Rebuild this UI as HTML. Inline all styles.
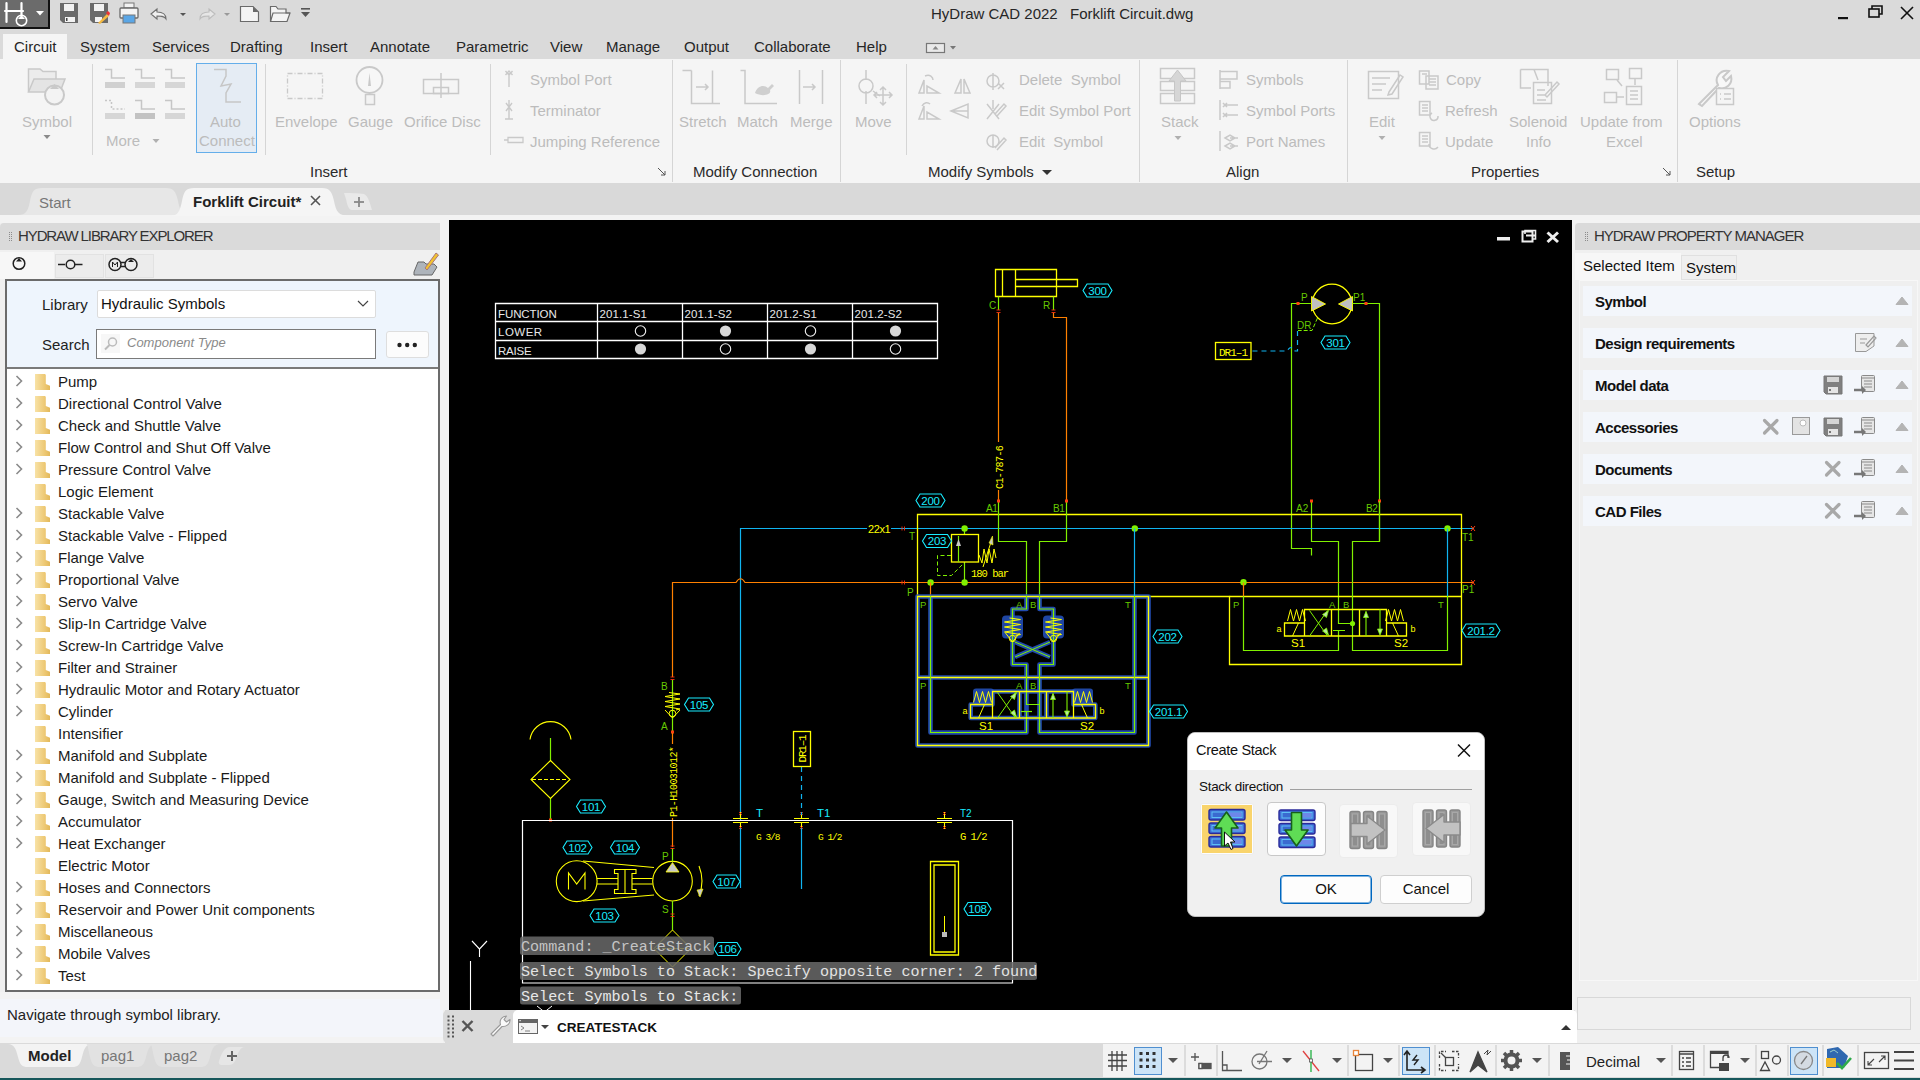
<!DOCTYPE html>
<html><head><meta charset="utf-8">
<style>
*{box-sizing:border-box;margin:0;padding:0}
html,body{width:1920px;height:1080px;overflow:hidden;background:#dadada;font-family:"Liberation Sans",sans-serif;color:#222;position:relative}
.a{position:absolute}
.t{position:absolute;white-space:nowrap}
.menu .t{font-size:15px;color:#262626;top:38px}
.rb{position:absolute;left:0;top:59px;width:1920px;height:124px;background:#f5f5f5}
.dis{color:#b5b5b5;font-size:15px}
.glab{font-size:15px;color:#262626;top:163px}
.sep{position:absolute;width:1px;background:#d5d5d5}
.tree .t{font-size:15px;color:#1a1a1a;line-height:17px}
.fold{position:absolute;left:35px;width:15px;height:16px;background:linear-gradient(90deg,#f8e2a6,#ecc670 70%,#e2b85a);clip-path:polygon(0 0,68% 0,72% 8%,72% 62%,100% 74%,100% 100%,0 100%)}
.grip{position:absolute;width:4px;height:10px;background-image:linear-gradient(90deg,#dadada 50%,transparent 50%),linear-gradient(#dadada 50%,#8c8c8c 50%);background-size:2px 2px}
</style></head><body>

<!-- title bar -->
<div class="a" style="left:0;top:0;width:50px;height:29px;background:#111"></div>
<div class="a" style="left:0;top:0;width:48px;height:27px;background:#6b6b6b"></div>
<svg class="a" style="left:0;top:0" width="50" height="29">
 <g stroke="#fff" stroke-width="2.2" fill="none" stroke-linecap="round">
  <line x1="6.5" y1="3" x2="6.5" y2="22"/><line x1="21.5" y1="3" x2="21.5" y2="15"/>
  <line x1="5" y1="11" x2="23" y2="11"/>
  <circle cx="21.5" cy="20.5" r="5.2" stroke-width="1.6"/>
 </g>
 <path d="M18 19 L21.5 15 L25 19 Z" fill="#fff"/>
 <path d="M36 11 L44 11 L40 15.5 Z" fill="#fff"/>
</svg>
<svg class="a" style="left:58px;top:2px" width="260" height="24">
 <g>
  <path d="M2 1h18v20H5l-3-3z" fill="#6a6a6a"/><rect x="6" y="2" width="10" height="7" fill="#f2f2f2"/><rect x="7" y="15" width="10" height="5" fill="#f2f2f2"/><rect x="8" y="16" width="1.5" height="3" fill="#444"/>
 </g>
 <g transform="translate(30,0)">
  <path d="M2 1h18v20H5l-3-3z" fill="#6a6a6a"/><rect x="6" y="2" width="10" height="7" fill="#f2f2f2"/><rect x="7" y="15" width="7" height="5" fill="#f2f2f2"/>
  <path d="M10 21 L19 12 L21 14 L12 22 Z" fill="#f5b940"/><path d="M18 11 L20 9 L22 11 L21 14 Z" fill="#e33"/>
 </g>
 <g transform="translate(60,0)">
  <rect x="6" y="1" width="10" height="5" fill="#f2f2f2" stroke="#777"/><rect x="2" y="6" width="18" height="10" rx="1" fill="#f4f4f4" stroke="#6a6a6a" stroke-width="1.3"/><rect x="5" y="13" width="12" height="8" fill="#5aa6e6" stroke="#777"/>
 </g>
 <g transform="translate(92,0)" fill="#f0f0f0" stroke="#707070" stroke-width="1.1">
  <path d="M1 12 L7 7 L7 10 C13 10 16 12 16 17 C14 14 11 14 7 14 L7 17 Z"/>
 </g>
 <path d="M122 11 L128 11 L125 14 Z" fill="#555"/>
 <g transform="translate(138,0)" fill="#e6e6e6" stroke="#bdbdbd" stroke-width="1.1">
  <path d="M19 12 L13 7 L13 10 C7 10 4 12 4 17 C6 14 9 14 13 14 L13 17 Z"/>
 </g>
 <path d="M166 11 L172 11 L169 14 Z" fill="#999"/>
 <path d="M182.5 4.5 H195 L200.5 10 V19.5 H182.5 Z" fill="#f4f4f4" stroke="#6a6a6a" stroke-width="1.2"/><path d="M195 4.5 L200.5 10 H195 Z" fill="#6a6a6a"/>
 <path d="M212.5 4.5 H218 L220 7 H228 V11 H232 L229 19.5 H212.5 Z" fill="#f4f4f4" stroke="#6a6a6a" stroke-width="1.2"/><path d="M212.5 19.5 L215 11 H232" fill="none" stroke="#6a6a6a" stroke-width="1.2"/>
 <rect x="243" y="6" width="9" height="1.6" fill="#555"/><path d="M243 10 L252 10 L247.5 15 Z" fill="#555"/>
</svg>
<div class="t" style="left:931px;top:5px;font-size:15px;color:#262626">HyDraw CAD 2022</div>
<div class="t" style="left:1070px;top:5px;font-size:15px;color:#262626">Forklift Circuit.dwg</div>
<svg class="a" style="left:1830px;top:0" width="90" height="28">
 <rect x="8" y="17" width="10" height="2.2" fill="#111"/>
 <g fill="none" stroke="#111" stroke-width="1.6"><rect x="39" y="9" width="10" height="8"/><path d="M42 9 V6 H52 V14 H49"/></g>
 <g stroke="#111" stroke-width="1.6"><line x1="71" y1="7" x2="83" y2="19"/><line x1="83" y1="7" x2="71" y2="19"/></g>
</svg>
<!-- menu tabs -->
<div class="menu">
<div class="a" style="left:3px;top:34px;width:64px;height:25px;background:#f5f5f5"></div>
<div class="t" style="left:14px">Circuit</div>
<div class="t" style="left:80px">System</div>
<div class="t" style="left:152px">Services</div>
<div class="t" style="left:230px">Drafting</div>
<div class="t" style="left:310px">Insert</div>
<div class="t" style="left:370px">Annotate</div>
<div class="t" style="left:456px">Parametric</div>
<div class="t" style="left:550px">View</div>
<div class="t" style="left:606px">Manage</div>
<div class="t" style="left:684px">Output</div>
<div class="t" style="left:754px">Collaborate</div>
<div class="t" style="left:856px">Help</div>
</div>

<!-- ribbon -->
<div class="rb"></div>
<div class="ribbon">
<style>
.ribbon .t{font-size:15px;line-height:17px;color:#bcbcbc}
.ribbon .g{color:#2a2a2a}
.ribbon svg{position:absolute;overflow:visible}
</style>
<!-- separators -->
<div class="sep" style="left:92px;top:64px;height:91px"></div>
<div class="sep" style="left:265px;top:64px;height:91px"></div>
<div class="sep" style="left:490px;top:64px;height:91px"></div>
<div class="sep" style="left:672px;top:60px;height:122px"></div>
<div class="sep" style="left:840px;top:60px;height:122px"></div>
<div class="sep" style="left:906px;top:64px;height:91px"></div>
<div class="sep" style="left:1139px;top:60px;height:122px"></div>
<div class="sep" style="left:1347px;top:60px;height:122px"></div>
<div class="sep" style="left:1677px;top:60px;height:122px"></div>

<!-- Symbol -->
<svg style="left:0;top:0" width="1920" height="183">
 <g fill="none" stroke="#c9c9c9" stroke-width="1.5">
  <!-- symbol folder -->
  <path d="M28.5 92 V69 H40 L43 71.5 H56 V79" fill="#ececec"/>
  <path d="M28.5 92 L34 79 H65 L60 92 Z" fill="#e4e4e4"/>
  <circle cx="54.5" cy="95" r="9.5" fill="#f3f3f3" stroke-width="2"/>
  <path d="M50 89 L54.5 84 L59 89 Z" fill="#c9c9c9" stroke="none"/>
  <!-- 6 grid icons -->
  <g stroke="#c6c6c6">
   <path d="M105 69.5 H111.5 V78 H125"/><rect x="105" y="82" width="20" height="6" fill="#d0d0d0" stroke="none"/>
   <path d="M135 69.5 H141.5 V78 H155"/><rect x="135" y="82" width="20" height="6" fill="#d6d6d6" stroke="none"/>
   <path d="M165 69.5 H171.5 V78 H185"/><rect x="165" y="82" width="20" height="6" fill="#d6d6d6" stroke="none"/>
   <path d="M105 100.5 H111.5 V109 H125" stroke-dasharray="2 2"/><rect x="105" y="113" width="20" height="6" fill="#d6d6d6" stroke="none"/>
   <path d="M135 100.5 H141.5 V109 H155"/><rect x="135" y="113" width="20" height="6" fill="#c2c2c2" stroke="none"/>
   <path d="M165 100.5 H171.5 V109 H185"/><rect x="165" y="113" width="20" height="6" fill="#d6d6d6" stroke="none"/>
  </g>
  <!-- envelope -->
  <rect x="287.5" y="73.5" width="35" height="25" stroke-dasharray="5 2 1 2" stroke-width="1.3"/>
  <!-- gauge -->
  <circle cx="369.5" cy="80" r="13" fill="#f7f7f7" stroke-width="1.8"/>
  <path d="M368 86 L369.5 73 L371 86 Z" fill="#c9c9c9" stroke="none"/>
  <rect x="365.5" y="94.5" width="9" height="10" fill="#f3f3f3"/>
  <!-- orifice -->
  <rect x="423.5" y="79.5" width="35" height="14"/><rect x="433.5" y="87.5" width="15" height="6"/><line x1="441" y1="73" x2="441" y2="98"/>
  <!-- symbol port etc -->
  <path d="M505.5 71 L509 75 L512.5 71 M505.5 75 L509 71 L512.5 75 M509 73 V87" stroke-width="1.4"/>
  <path d="M506 103 L512 111 M512 103 L506 111 M509 100 V119 M505 119 H513" stroke-width="1.4"/>
  <path d="M504 140 H508 M508 137.5 H523 V142.5 H508 Z" stroke-width="1.3"/>
  <!-- stretch -->
  <path d="M682.5 70.5 H691.5 M691.5 70.5 V103.5 H720 M712.5 70.5 V103.5 M696 87 H708 M705 84 L708 87 L705 90"/>
  <!-- match -->
  <path d="M740.5 70.5 H745 V103.5 H777"/><path d="M755 93 C757 86 764 84 768 88 L772 84 L774 86 L770 90 C772 95 762 97 755 93 Z" fill="#cfcfcf" stroke="none"/>
  <!-- merge -->
  <path d="M799.5 70 V104 M822.5 70 V104 M803 87 H815 M812 84 L815 87 L812 90"/>
  <!-- move -->
  <path d="M866 70 V80 M866 91 V104 M859 86 A7 7 0 1 0 873 86 A7 7 0 1 0 859 86 M873 91 L880 96"/>
  <path d="M883 87 V105 M874 95 H892 M880 90 L883 87 L886 90 M880 102 L883 105 L886 102 M877 92 L874 95 L877 98 M889 92 L892 95 L889 98"/>
  <!-- modify symbols small -->
  <path d="M919 93 L924 80 V93 Z M927 93 V86 L939 93 Z M925 76 C930 74 933 77 933 80"/>
  <path d="M919 119 L924 106 V119 Z M927 119 V112 L939 119 Z M922 106 C924 102 928 102 930 104"/>
  <path d="M955 93 L961 79 V93 Z M964 93 V79 L970 93 Z"/>
  <path d="M951 111 L968 104 V118 Z M951 111 H968"/>
  <path d="M993 73 V90 M987 81 A6 6 0 0 0 999 81 A6 6 0 0 0 987 81 M998 83 L1004 89 M1004 83 L998 89"/>
  <path d="M987 104 L999 119 M999 104 L987 119 M993 100 L993 109 M995 114 L1004 104 L1006 106 L997 116"/>
  <path d="M993 135 V148 M987 141 A5 5 0 0 0 999 141 A5 5 0 0 0 987 141 M995 148 L1004 138 L1006 140 L997 150"/>
  <!-- stack -->
  <rect x="1160.5" y="68.5" width="34" height="10"/><rect x="1160.5" y="81.5" width="34" height="9"/><rect x="1160.5" y="93.5" width="34" height="10"/>
  <path d="M1174.5 101 V81 H1169 L1177.5 70 L1186 81 H1180.5 V101 Z" fill="#d6d6d6" stroke="#c6c6c6" stroke-width="1"/>
  <!-- align small -->
  <path d="M1220 70 V89 M1220.5 71.5 H1237 V79 H1220.5 M1220.5 81.5 H1230 V88 H1220.5"/>
  <path d="M1220 100 V120 M1223 103 L1227 107 M1227 103 L1223 107 M1223 113 L1227 117 M1227 113 L1223 117 M1226 105 H1238 M1226 115 H1238"/>
  <path d="M1220 131 V151 M1230 138 H1238 M1230 146 H1238 M1225 138 L1230 135 L1235 138 L1230 141 Z M1225 146 L1230 143 L1235 146 L1230 149 Z"/>
  <!-- edit -->
  <rect x="1368.5" y="71.5" width="30" height="27"/><path d="M1372 78 H1390 M1372 84 H1386 M1372 90 H1382 M1389 92 L1400 75 L1403 77 L1392 94 L1388 95 Z" fill="none"/>
  <!-- copy refresh update -->
  <path d="M1419.5 71 H1429 V84 H1419.5 Z M1426 76 H1438 V89 H1426 Z M1422 74 H1427 M1429 79 H1436 M1429 82 H1436 M1429 85 H1436"/>
  <path d="M1419.5 101.5 H1430 V115 H1419.5 Z M1422 105 H1428 M1422 108 H1428 M1422 111 H1428 M1432 113 A4 4 0 1 0 1438 116"/>
  <path d="M1419.5 132.5 H1430 V146 H1419.5 Z M1422 136 H1428 M1422 139 H1428 M1422 142 H1428 M1429 144 A5 5 0 0 0 1438 147"/>
  <!-- solenoid info -->
  <path d="M1520.5 69.5 H1548 V86 M1520.5 69.5 V88 H1531 M1534 69.5 L1538 80"/><rect x="1533.5" y="82.5" width="18" height="21"/><path d="M1537 90 H1545 M1537 95 H1545 M1537 100 H1546 M1545 95 L1557 82 L1559 84 L1547 97 Z"/>
  <!-- update from excel -->
  <rect x="1606.5" y="69.5" width="12" height="10"/><rect x="1629.5" y="68.5" width="12" height="10"/><rect x="1604.5" y="92.5" width="12" height="10"/><rect x="1626.5" y="86.5" width="15" height="18"/>
  <path d="M1617 80 L1622 86 M1635 79 V85 M1617 97 H1624 M1630 91 H1638 M1630 95 H1638 M1630 99 H1638"/>
  <!-- options -->
  <path d="M1699 104 L1718 85 C1714 78 1720 69 1729 71 L1723 77 L1726 81 L1731 76 C1733 84 1726 90 1719 88 L1702 106 Z" stroke-width="2" fill="#f8f8f8"/>
  <rect x="1716.5" y="88.5" width="17" height="16" fill="#f5f5f5"/><path d="M1720 94 H1721 M1724 94 H1731 M1720 99 H1721 M1724 99 H1731"/>
 </g>
 <!-- dropdown arrows -->
 <g fill="#8a8a8a">
  <path d="M43.5 135 H50.5 L47 139 Z"/>
  <path d="M152.5 139 H159.5 L156 143 Z" fill="#b0b0b0"/>
  <path d="M1174.5 136 H1181.5 L1178 140 Z" fill="#b0b0b0"/>
  <path d="M1378.5 136 H1385.5 L1382 140 Z" fill="#b0b0b0"/>
  <path d="M1042 170 H1052 L1047 175 Z" fill="#333"/>
 </g>
 <!-- launchers -->
 <g stroke="#555" stroke-width="1" fill="none">
  <path d="M658 168 L665 175 M665 171 V175 H661"/>
  <path d="M1663 168 L1670 175 M1670 171 V175 H1666"/>
 </g>
 <!-- ribbon min btn -->
 <rect x="926.5" y="43.5" width="18" height="9" fill="#e9e9e9" stroke="#777" stroke-width="1.2"/>
 <path d="M932.5 49.5 L935.5 46 L938.5 49.5 Z" fill="#888"/><path d="M950 46 H956 L953 49.5 Z" fill="#777"/>
</svg>
<!-- auto connect highlight -->
<div class="a" style="left:196px;top:63px;width:61px;height:90px;background:#e5ecf4;border:1px solid #64aeea"></div>
<svg style="left:0;top:0" width="300" height="183">
 <g fill="none" stroke="#c6c6c6" stroke-width="1.5">
  <path d="M214 69.5 H226 V76 L221 86 L231 84 L226 93 V102 H241"/>
 </g>
</svg>

<div class="t" style="left:22px;top:113px">Symbol</div>
<div class="t" style="left:106px;top:132px">More</div>
<div class="t" style="left:210px;top:113px">Auto</div>
<div class="t" style="left:199px;top:132px">Connect</div>
<div class="t" style="left:275px;top:113px">Envelope</div>
<div class="t" style="left:348px;top:113px">Gauge</div>
<div class="t" style="left:404px;top:113px">Orifice Disc</div>
<div class="t" style="left:530px;top:71px">Symbol Port</div>
<div class="t" style="left:530px;top:102px">Terminator</div>
<div class="t" style="left:530px;top:133px">Jumping Reference</div>
<div class="t" style="left:679px;top:113px">Stretch</div>
<div class="t" style="left:737px;top:113px">Match</div>
<div class="t" style="left:790px;top:113px">Merge</div>
<div class="t" style="left:855px;top:113px">Move</div>
<div class="t" style="left:1019px;top:71px">Delete&nbsp; Symbol</div>
<div class="t" style="left:1019px;top:102px">Edit Symbol Port</div>
<div class="t" style="left:1019px;top:133px">Edit&nbsp; Symbol</div>
<div class="t" style="left:1161px;top:113px">Stack</div>
<div class="t" style="left:1246px;top:71px">Symbols</div>
<div class="t" style="left:1246px;top:102px">Symbol Ports</div>
<div class="t" style="left:1246px;top:133px">Port Names</div>
<div class="t" style="left:1369px;top:113px">Edit</div>
<div class="t" style="left:1446px;top:71px">Copy</div>
<div class="t" style="left:1445px;top:102px">Refresh</div>
<div class="t" style="left:1445px;top:133px">Update</div>
<div class="t" style="left:1509px;top:113px">Solenoid</div>
<div class="t" style="left:1526px;top:133px">Info</div>
<div class="t" style="left:1580px;top:113px">Update from</div>
<div class="t" style="left:1606px;top:133px">Excel</div>
<div class="t" style="left:1689px;top:113px">Options</div>

<div class="t g" style="left:310px;top:163px">Insert</div>
<div class="t g" style="left:693px;top:163px">Modify Connection</div>
<div class="t g" style="left:928px;top:163px">Modify Symbols</div>
<div class="t g" style="left:1226px;top:163px">Align</div>
<div class="t g" style="left:1471px;top:163px">Properties</div>
<div class="t g" style="left:1696px;top:163px">Setup</div>
</div>
<!-- doc tabs -->
<div class="a" style="left:0;top:183px;width:1920px;height:32px;background:#d9d9d9"></div>
<div class="a" style="left:0;top:215px;width:1920px;height:8px;background:#f3f3f3"></div>
<svg class="a" style="left:0;top:183px" width="400" height="34">
 <path d="M18 32 C26 32 28 28 30 18 C32 8 34 5 42 5 L166 5 C174 5 176 9 178 18 C180 28 182 32 190 32 Z" fill="#e7e7e7"/>
 <path d="M170 33 C178 33 180 28 182 18 C184 8 186 5 194 5 L322 5 C330 5 332 9 334 18 C336 28 338 33 350 33 Z" fill="#f5f5f5"/>
 <path d="M344 10 C346 10 360 10 364 11 C368 13 370 20 372 27 L352 27 C348 27 347 20 346 16 Z" fill="#e9e9e9"/>
 <g stroke="#555" stroke-width="1.6"><line x1="311" y1="13" x2="320" y2="22"/><line x1="320" y1="13" x2="311" y2="22"/></g>
 <g stroke="#888" stroke-width="1.8"><line x1="359" y1="14" x2="359" y2="24"/><line x1="354" y1="19" x2="364" y2="19"/></g>
</svg>
<div class="t" style="left:39px;top:194px;font-size:15px;color:#777">Start</div>
<div class="t" style="left:193px;top:193px;font-size:15px;font-weight:bold;color:#222">Forklift Circuit*</div>

<!-- left panel -->
<div class="a" style="left:0;top:223px;width:445px;height:820px;background:#f0f0f0"></div>
<div class="a" style="left:0;top:223px;width:445px;height:27px;background:#dadada;border-radius:4px 4px 0 0"></div>
<div class="grip" style="left:8px;top:231px"></div>
<div class="t" style="left:18px;top:227px;font-size:15px;letter-spacing:-1.1px;color:#333">HYDRAW LIBRARY EXPLORER</div>
<div class="a" style="left:0;top:252px;width:54px;height:27px;background:#f7f7f7"></div>
<div class="a" style="left:55px;top:254px;width:49px;height:24px;background:#ececec;border:1px solid #e2e2e2"></div>
<div class="a" style="left:105px;top:254px;width:49px;height:24px;background:#ececec;border:1px solid #e2e2e2"></div>
<svg class="a" style="left:0;top:250px" width="445" height="30">
 <g fill="none" stroke="#222" stroke-width="1.5">
  <circle cx="19" cy="13.5" r="5.8"/><path d="M16 11.5 L19 8 L22 11.5 Z" fill="#222" stroke="none"/>
  <line x1="58" y1="14.5" x2="65" y2="14.5"/><circle cx="70.5" cy="14.5" r="4.3"/><line x1="75" y1="14.5" x2="82.5" y2="14.5"/>
  <circle cx="115" cy="14.5" r="6"/><circle cx="131" cy="14.5" r="6"/><path d="M121 12.5 H125 M121 16.5 H125"/>
  <path d="M112.5 17 V12 L115 15 L117.5 12 V17" stroke-width="1"/><path d="M128 12 L131 9 L134 12 Z" fill="#222" stroke="none"/>
 </g>
 <path d="M414 22 L418 12 L424 12 L426 14 L434 14 L437 17 L432 25 L414 25 Z" fill="#aeb4bb" stroke="#666" stroke-width="1"/>
 <path d="M425 18 L436 3 L438.5 5 L427 20 Z" fill="#f2c230" stroke="#a77"/>
</svg>
<div class="a" style="left:5px;top:279px;width:435px;height:713px;border:2px solid #6b6b6b;background:#fff"></div>
<div class="a" style="left:7px;top:281px;width:431px;height:88px;background:#eef5fd;border-bottom:2px solid #7a7a7a"></div>
<div class="t" style="left:42px;top:296px;font-size:15px;color:#222">Library</div>
<div class="a" style="left:97px;top:290px;width:279px;height:28px;background:#fff;border:1px solid #dcdcdc;border-radius:2px"></div>
<div class="t" style="left:101px;top:295px;font-size:15px;color:#111">Hydraulic Symbols</div>
<svg class="a" style="left:355px;top:296px" width="16" height="16"><path d="M3 5 L8 10 L13 5" fill="none" stroke="#444" stroke-width="1.2"/></svg>
<div class="t" style="left:42px;top:336px;font-size:15px;color:#222">Search</div>
<div class="a" style="left:96px;top:329px;width:280px;height:30px;background:#fff;border:1px solid #7a7a7a"></div>
<svg class="a" style="left:100px;top:333px" width="22" height="22"><rect x="1" y="1" width="19" height="19" fill="#f7f7f7"/><circle cx="12.5" cy="9" r="4" fill="none" stroke="#bbb" stroke-width="1.5"/><line x1="9.5" y1="12" x2="5" y2="16.5" stroke="#bbb" stroke-width="2"/></svg>
<div class="t" style="left:127px;top:335px;font-size:13px;font-style:italic;color:#8a8a8a">Component Type</div>
<div class="a" style="left:386px;top:331px;width:43px;height:27px;background:#fcfcfc;border:1px solid #dedede;border-radius:3px"></div>
<svg class="a" style="left:386px;top:331px" width="43" height="27"><g fill="#222"><circle cx="13.5" cy="14" r="2.2"/><circle cx="21.2" cy="14" r="2.2"/><circle cx="28.8" cy="14" r="2.2"/></g></svg>
<div class="tree">
<svg class="a" style="left:0;top:0" width="60" height="1000"><g fill="none" stroke="#8a8a8a" stroke-width="1.6">
<path d="M16.5 376 L21.5 381 L16.5 386"/>
<path d="M16.5 398 L21.5 403 L16.5 408"/>
<path d="M16.5 420 L21.5 425 L16.5 430"/>
<path d="M16.5 442 L21.5 447 L16.5 452"/>
<path d="M16.5 464 L21.5 469 L16.5 474"/>
<path d="M16.5 508 L21.5 513 L16.5 518"/>
<path d="M16.5 530 L21.5 535 L16.5 540"/>
<path d="M16.5 552 L21.5 557 L16.5 562"/>
<path d="M16.5 574 L21.5 579 L16.5 584"/>
<path d="M16.5 596 L21.5 601 L16.5 606"/>
<path d="M16.5 618 L21.5 623 L16.5 628"/>
<path d="M16.5 640 L21.5 645 L16.5 650"/>
<path d="M16.5 662 L21.5 667 L16.5 672"/>
<path d="M16.5 684 L21.5 689 L16.5 694"/>
<path d="M16.5 706 L21.5 711 L16.5 716"/>
<path d="M16.5 750 L21.5 755 L16.5 760"/>
<path d="M16.5 772 L21.5 777 L16.5 782"/>
<path d="M16.5 794 L21.5 799 L16.5 804"/>
<path d="M16.5 816 L21.5 821 L16.5 826"/>
<path d="M16.5 838 L21.5 843 L16.5 848"/>
<path d="M16.5 882 L21.5 887 L16.5 892"/>
<path d="M16.5 904 L21.5 909 L16.5 914"/>
<path d="M16.5 926 L21.5 931 L16.5 936"/>
<path d="M16.5 948 L21.5 953 L16.5 958"/>
<path d="M16.5 970 L21.5 975 L16.5 980"/>
</g></svg>
<div class="t" style="left:58px;top:373px">Pump</div>
<div class="fold" style="top:374px"></div>
<div class="t" style="left:58px;top:395px">Directional Control Valve</div>
<div class="fold" style="top:396px"></div>
<div class="t" style="left:58px;top:417px">Check and Shuttle Valve</div>
<div class="fold" style="top:418px"></div>
<div class="t" style="left:58px;top:439px">Flow Control and Shut Off Valve</div>
<div class="fold" style="top:440px"></div>
<div class="t" style="left:58px;top:461px">Pressure Control Valve</div>
<div class="fold" style="top:462px"></div>
<div class="t" style="left:58px;top:483px">Logic Element</div>
<div class="fold" style="top:484px"></div>
<div class="t" style="left:58px;top:505px">Stackable Valve</div>
<div class="fold" style="top:506px"></div>
<div class="t" style="left:58px;top:527px">Stackable Valve - Flipped</div>
<div class="fold" style="top:528px"></div>
<div class="t" style="left:58px;top:549px">Flange Valve</div>
<div class="fold" style="top:550px"></div>
<div class="t" style="left:58px;top:571px">Proportional Valve</div>
<div class="fold" style="top:572px"></div>
<div class="t" style="left:58px;top:593px">Servo Valve</div>
<div class="fold" style="top:594px"></div>
<div class="t" style="left:58px;top:615px">Slip-In Cartridge Valve</div>
<div class="fold" style="top:616px"></div>
<div class="t" style="left:58px;top:637px">Screw-In Cartridge Valve</div>
<div class="fold" style="top:638px"></div>
<div class="t" style="left:58px;top:659px">Filter and Strainer</div>
<div class="fold" style="top:660px"></div>
<div class="t" style="left:58px;top:681px">Hydraulic Motor and Rotary Actuator</div>
<div class="fold" style="top:682px"></div>
<div class="t" style="left:58px;top:703px">Cylinder</div>
<div class="fold" style="top:704px"></div>
<div class="t" style="left:58px;top:725px">Intensifier</div>
<div class="fold" style="top:726px"></div>
<div class="t" style="left:58px;top:747px">Manifold and Subplate</div>
<div class="fold" style="top:748px"></div>
<div class="t" style="left:58px;top:769px">Manifold and Subplate - Flipped</div>
<div class="fold" style="top:770px"></div>
<div class="t" style="left:58px;top:791px">Gauge, Switch and Measuring Device</div>
<div class="fold" style="top:792px"></div>
<div class="t" style="left:58px;top:813px">Accumulator</div>
<div class="fold" style="top:814px"></div>
<div class="t" style="left:58px;top:835px">Heat Exchanger</div>
<div class="fold" style="top:836px"></div>
<div class="t" style="left:58px;top:857px">Electric Motor</div>
<div class="fold" style="top:858px"></div>
<div class="t" style="left:58px;top:879px">Hoses and Connectors</div>
<div class="fold" style="top:880px"></div>
<div class="t" style="left:58px;top:901px">Reservoir and Power Unit components</div>
<div class="fold" style="top:902px"></div>
<div class="t" style="left:58px;top:923px">Miscellaneous</div>
<div class="fold" style="top:924px"></div>
<div class="t" style="left:58px;top:945px">Mobile Valves</div>
<div class="fold" style="top:946px"></div>
<div class="t" style="left:58px;top:967px">Test</div>
<div class="fold" style="top:968px"></div>
</div>
<div class="a" style="left:0;top:992px;width:443px;height:51px;background:#f3f3f3"></div><div class="a" style="left:0;top:999px;width:443px;height:38px;background:#f3f5fa"></div>
<div class="t" style="left:7px;top:1006px;font-size:15px;color:#222">Navigate through symbol library.</div>

<!-- canvas -->
<div class="a" style="left:440px;top:215px;width:10px;height:795px;background:#f3f3f3"></div>
<div class="a" style="left:1570px;top:215px;width:8px;height:795px;background:#f3f3f3"></div>
<div class="a" style="left:449px;top:220px;width:1123px;height:790px;background:#000"></div>
<svg class="a" style="left:1490px;top:225px" width="80" height="25">
 <rect x="7" y="12" width="13" height="3.5" fill="#eee"/>
 <rect x="32.5" y="6.5" width="10" height="10" fill="none" stroke="#eee" stroke-width="2"/><rect x="36" y="9.5" width="9" height="2" fill="#eee"/><path d="M35 9 V5.5 H45.5 V14 H43" fill="none" stroke="#eee" stroke-width="1.6"/>
 <g stroke="#eee" stroke-width="3"><line x1="57.5" y1="7.5" x2="68" y2="17"/><line x1="68" y1="7.5" x2="57.5" y2="17"/></g>
</svg>
<div id="cad"><svg class="a" style="left:449px;top:220px" width="1123" height="791" viewBox="449 220 1123 791"><path d="M495.5 303.5 H937.5 V358.5 H495.5 Z" stroke="#ffffff" stroke-width="1.3" fill="none" />
<path d="M495.5 321.5 H937.5" stroke="#ffffff" stroke-width="1.3" fill="none" />
<path d="M495.5 340.5 H937.5" stroke="#ffffff" stroke-width="1.3" fill="none" />
<path d="M597.5 303.5 V358.5" stroke="#ffffff" stroke-width="1.3" fill="none" />
<path d="M682.5 303.5 V358.5" stroke="#ffffff" stroke-width="1.3" fill="none" />
<path d="M767.5 303.5 V358.5" stroke="#ffffff" stroke-width="1.3" fill="none" />
<path d="M852.5 303.5 V358.5" stroke="#ffffff" stroke-width="1.3" fill="none" />
<text x="498" y="317.5" fill="#e8e8e8" font-size="11.5" font-family="Liberation Sans" text-anchor="start" letter-spacing="-0.1">FUNCTION</text>
<text x="498" y="336" fill="#e8e8e8" font-size="11.5" font-family="Liberation Sans" text-anchor="start" letter-spacing="0.5">LOWER</text>
<text x="498" y="354.5" fill="#e8e8e8" font-size="11.5" font-family="Liberation Sans" text-anchor="start" letter-spacing="-0.2">RAISE</text>
<text x="599.5" y="317.5" fill="#e8e8e8" font-size="11.5" font-family="Liberation Sans" text-anchor="start" letter-spacing="0.1">201.1-S1</text>
<text x="684.5" y="317.5" fill="#e8e8e8" font-size="11.5" font-family="Liberation Sans" text-anchor="start" letter-spacing="0.1">201.1-S2</text>
<text x="769.5" y="317.5" fill="#e8e8e8" font-size="11.5" font-family="Liberation Sans" text-anchor="start" letter-spacing="0.1">201.2-S1</text>
<text x="854.5" y="317.5" fill="#e8e8e8" font-size="11.5" font-family="Liberation Sans" text-anchor="start" letter-spacing="0.1">201.2-S2</text>
<circle cx="640.5" cy="331" r="5.2" fill="none" stroke="#f0f0f0" stroke-width="1.1"/>
<circle cx="640.5" cy="349" r="5.6" fill="#d8d8d8"/>
<circle cx="725.5" cy="331" r="5.6" fill="#d8d8d8"/>
<circle cx="725.5" cy="349" r="5.2" fill="none" stroke="#f0f0f0" stroke-width="1.1"/>
<circle cx="810.5" cy="331" r="5.2" fill="none" stroke="#f0f0f0" stroke-width="1.1"/>
<circle cx="810.5" cy="349" r="5.6" fill="#d8d8d8"/>
<circle cx="895.5" cy="331" r="5.6" fill="#d8d8d8"/>
<circle cx="895.5" cy="349" r="5.2" fill="none" stroke="#f0f0f0" stroke-width="1.1"/>
<path d="M995.5 269.5 H1056.5 V296.5 H995.5 Z M1002.5 269.5 V296.5 M1015.5 269.5 V296.5 M1015.5 279.5 H1077.5 V286.5 H1015.5" stroke="#ffff00" stroke-width="1.3" fill="none" />
<path d="M998.5 296.5 V310" stroke="#80f000" stroke-width="1.2" fill="none" />
<path d="M1053.5 296.5 V310" stroke="#80f000" stroke-width="1.2" fill="none" />
<text x="989" y="309" fill="#66c800" font-size="10" font-family="Liberation Sans" text-anchor="start" >C</text>
<text x="1043" y="309" fill="#66c800" font-size="10" font-family="Liberation Sans" text-anchor="start" >R</text>
<path d="M996.5 310 H1000.5 M996.5 312.5 H1000.5" stroke="#ff3010" stroke-width="0.9" fill="none" />
<path d="M1051.5 310 H1055.5 M1051.5 312.5 H1055.5" stroke="#ff3010" stroke-width="0.9" fill="none" />
<path d="M998.5 313 V442 M998.5 490 V501" stroke="#ff8000" stroke-width="1.2" fill="none" />
<path d="M1053.5 313 V317.5 H1066.5 V501" stroke="#ff8000" stroke-width="1.2" fill="none" />
<path d="M1087.0 284.0 H1108.0 L1112.0 290.5 L1108.0 297.0 H1087.0 L1083.0 290.5 Z" stroke="#18ecff" stroke-width="1.1" fill="none"/>
<text x="1097.5" y="294.7" fill="#18ecff" font-size="11.5" font-family="Liberation Sans" text-anchor="middle" letter-spacing="-0.3">300</text>
<text x="1003" y="489" fill="#ffff00" font-size="10" font-family="Liberation Mono" text-anchor="start" transform="rotate(-90 1003 489)" letter-spacing="-0.6">C1-787-6</text>
<circle cx="1332" cy="304" r="19.8" stroke="#ffff00" stroke-width="1.2" fill="none"/>
<path d="M1311.5 296.5 L1325.5 304 L1311.5 311 Z" fill="#c0c0c0" stroke="#ffff00" stroke-width=".9"/>
<path d="M1352.5 296.5 L1338.5 304 L1352.5 311 Z" fill="#c0c0c0" stroke="#ffff00" stroke-width=".9"/>
<path d="M1311.5 303.5 H1291.5 V548.5 H1311.5 V555.5" stroke="#80f000" stroke-width="1.2" fill="none" />
<path d="M1352.5 303.5 H1379.5 V541.5" stroke="#80f000" stroke-width="1.2" fill="none" />
<path d="M1311.5 501 V541.5 H1338.5 V623.5 H1352.5" stroke="#80f000" stroke-width="1.2" fill="none" />
<rect x="1296.5" y="302.0" width="3" height="3" fill="#ff4010"/>
<rect x="1364.5" y="302.0" width="3" height="3" fill="#ff4010"/>
<text x="1301" y="301" fill="#66c800" font-size="10" font-family="Liberation Sans" text-anchor="start" >P</text>
<text x="1353" y="301" fill="#66c800" font-size="10" font-family="Liberation Sans" text-anchor="start" >P1</text>
<text x="1297" y="329" fill="#66c800" font-size="10" font-family="Liberation Sans" text-anchor="start" >DR</text>
<path d="M1317.5 318 L1312 330.5 H1298" stroke="#80f000" stroke-width="1" fill="none" stroke-dasharray="4 2"/>
<path d="M1297.5 331 V351 H1295 Q1291.5 344 1287 351 H1251" stroke="#10b4f0" stroke-width="1.2" fill="none" stroke-dasharray="5 4"/>
<rect x="1215.5" y="342.5" width="35.5" height="17" stroke="#ffff00" stroke-width="1.3" fill="none"/>
<text x="1233" y="355.5" fill="#ffff00" font-size="11" font-family="Liberation Mono" text-anchor="middle" letter-spacing="-1">DR1&#8211;1</text>
<path d="M1325.0 336.0 H1346.0 L1350.0 342.5 L1346.0 349.0 H1325.0 L1321.0 342.5 Z" stroke="#18ecff" stroke-width="1.1" fill="none"/>
<text x="1335.5" y="346.7" fill="#18ecff" font-size="11.5" font-family="Liberation Sans" text-anchor="middle" letter-spacing="-0.3">301</text>
<path d="M740.5 820 V528.5 H867 M891 528.5 H1474" stroke="#10b4f0" stroke-width="1.2" fill="none" />
<path d="M672.5 677 V582.5 H736 Q740.5 575 745 582.5 H1474" stroke="#ff8000" stroke-width="1.2" fill="none" />
<text x="868" y="533" fill="#ffff00" font-size="11" font-family="Liberation Sans" text-anchor="start" letter-spacing="-0.4">22x1</text>
<path d="M902 526.5 V530.5 M904.5 526.5 V530.5" stroke="#ff3010" stroke-width="0.9" fill="none" />
<path d="M902 580.5 V584.5 M904.5 580.5 V584.5" stroke="#ff3010" stroke-width="0.9" fill="none" />
<text x="909" y="540" fill="#66c800" font-size="10" font-family="Liberation Sans" text-anchor="start" >T</text>
<text x="907" y="596" fill="#66c800" font-size="10" font-family="Liberation Sans" text-anchor="start" >P</text>
<path d="M1471 526 L1475 531 M1475 526 L1471 531 M1471 580 L1475 585 M1475 580 L1471 585" stroke="#ff4010" stroke-width="1" fill="none" />
<path d="M917.5 596 V514.5 H1461.5 V664.5 H1229.5 V596.5 H1148.5" stroke="#ffff00" stroke-width="1.3" fill="none" />
<path d="M998.5 501 V541.5 H1026.5 V596" stroke="#80f000" stroke-width="1.2" fill="none" />
<path d="M1066.5 501 V541.5 H1039.5 V596" stroke="#80f000" stroke-width="1.2" fill="none" />
<rect x="997.0" y="499.5" width="3" height="3" fill="#ff4010"/>
<rect x="1065.0" y="499.5" width="3" height="3" fill="#ff4010"/>
<text x="986" y="512" fill="#66c800" font-size="10" font-family="Liberation Sans" text-anchor="start" letter-spacing="-0.5">A1</text>
<text x="1053" y="512" fill="#66c800" font-size="10" font-family="Liberation Sans" text-anchor="start" letter-spacing="-0.5">B1</text>
<text x="1296" y="512" fill="#66c800" font-size="10" font-family="Liberation Sans" text-anchor="start" >A2</text>
<text x="1366" y="512" fill="#66c800" font-size="10" font-family="Liberation Sans" text-anchor="start" letter-spacing="-0.5">B2</text>
<rect x="1310.0" y="499.5" width="3" height="3" fill="#ff4010"/>
<rect x="1378.0" y="499.5" width="3" height="3" fill="#ff4010"/>
<circle cx="964.6" cy="528.5" r="3.2" fill="#80f000"/>
<circle cx="930.6" cy="582.5" r="3.2" fill="#80f000"/>
<circle cx="964.6" cy="582.5" r="3.2" fill="#80f000"/>
<path d="M964.5 528.5 V534.5 M964.5 562 V582.5" stroke="#80f000" stroke-width="1.2" fill="none" />
<rect x="951.5" y="534.5" width="27" height="27.5" stroke="#ffff00" stroke-width="1.3" fill="none"/>
<path d="M958.5 536 V562" stroke="#80f000" stroke-width="1.2" fill="none" />
<path d="M956 546 L958.5 539 L961 546 Z" fill="#c8c8c8"/>
<path d="M951 555.5 H937.5 V575.5 H951.5 L964 563" stroke="#80f000" stroke-width="1" fill="none" stroke-dasharray="4 2.5"/>
<path d="M979 555 L982 563 L984 549 L987 563 L989 549 L992 563 L994 549 L996 558" stroke="#ffff00" stroke-width="1" fill="none" />
<path d="M983 567 L992 539" stroke="#ffff00" stroke-width="1" fill="none" />
<path d="M989 543 L992.5 536 L993 545 Z" fill="#c8c8c8" stroke="#ffff00" stroke-width=".6"/>
<text x="971" y="577" fill="#ffff00" font-size="10.5" font-family="Liberation Mono" text-anchor="start" letter-spacing="-1">180 bar</text>
<path d="M920.0 494.0 H941.0 L945.0 500.5 L941.0 507.0 H920.0 L916.0 500.5 Z" stroke="#18ecff" stroke-width="1.1" fill="none"/>
<text x="930.5" y="504.7" fill="#18ecff" font-size="11.5" font-family="Liberation Sans" text-anchor="middle" letter-spacing="-0.3">200</text>
<path d="M926.5 534.5 H947.5 L951.5 541 L947.5 547.5 H926.5 L922.5 541 Z" stroke="#18ecff" stroke-width="1.1" fill="none"/>
<text x="937" y="545.2" fill="#18ecff" font-size="11.5" font-family="Liberation Sans" text-anchor="middle" letter-spacing="-0.3">203</text>
<path d="M930.5 582.5 V596" stroke="#ff8000" stroke-width="1.2" fill="none" />
<rect x="1002.0" y="615.5" width="21" height="23" rx="4" fill="#2552c0" opacity=".85"/>
<rect x="1043.0" y="615.5" width="21" height="23" rx="4" fill="#2552c0" opacity=".85"/>
<rect x="973" y="688.5" width="21" height="16" rx="3" fill="#2552c0" opacity=".85"/><rect x="1072" y="688.5" width="21" height="16" rx="3" fill="#2552c0" opacity=".85"/>
<path d="M917.5 596.5 H1148.5 V745.5 H917.5 Z M917.5 677.5 H1148.5" stroke="#2552c0" stroke-width="4.6" fill="none" stroke-linejoin="round" opacity="0.9"/>
<path d="M930.5 596.5 V732.5 H1026.5 V664.5 H1012.5 V609 H1026.5 V596.5 M1039.5 596.5 V609 H1053.5 V664.5 H1039.5 V732.5 H1134.5 V596.5" stroke="#2552c0" stroke-width="4.6" fill="none" stroke-linejoin="round" opacity="0.9"/>
<path d="M1012.5 618 V640 M1053.5 618 V640 M1015 642 L1050 657 M1050 642 L1015 657" stroke="#2552c0" stroke-width="4.6" fill="none" stroke-linejoin="round" opacity="0.9"/>
<path d="M970.7 704.5 H992.5 V691.5 H1073.5 V704.5 H1095.3 V718 H970.7 Z M1019.5 691.5 V718 M1046.5 691.5 V718" stroke="#2552c0" stroke-width="4.6" fill="none" stroke-linejoin="round" opacity="0.9"/>
<path d="M917.5 596.5 H1148.5 V745.5 H917.5 Z M917.5 677.5 H1148.5" stroke="#ffff00" stroke-width="1.3" fill="none" />
<path d="M930.5 596 V732.5 H1026.5 V711.5 M1039.5 723 V732.5 H1134.5 V596" stroke="#80f000" stroke-width="1.2" fill="none" />
<path d="M1026.5 596 V609 H1012.5 V664.5 H1026.5 V704.5 H1039.5 M1039.5 596 V609 H1053.5 V664.5 H1039.5 V733" stroke="#80f000" stroke-width="1.2" fill="none" />
<path d="M1009.5 618 L1020.5 619.5 L1004.5 622 L1020.5 624.5 L1004.5 627 L1020.5 629.5 L1004.5 632 L1020.5 634.5 L1015.5 635.5" stroke="#ffff00" stroke-width="1" fill="none" />
<circle cx="1012.5" cy="638.5" r="3.2" stroke="#ffff00" stroke-width="1" fill="none"/>
<path d="M1005.5 633 L1012.5 642 L1019.5 633" stroke="#ffff00" stroke-width="1" fill="none" />
<path d="M1050.5 618 L1061.5 619.5 L1045.5 622 L1061.5 624.5 L1045.5 627 L1061.5 629.5 L1045.5 632 L1061.5 634.5 L1056.5 635.5" stroke="#ffff00" stroke-width="1" fill="none" />
<circle cx="1053.5" cy="638.5" r="3.2" stroke="#ffff00" stroke-width="1" fill="none"/>
<path d="M1046.5 633 L1053.5 642 L1060.5 633" stroke="#ffff00" stroke-width="1" fill="none" />
<path d="M1015 642 L1050 657 M1050 642 L1015 657" stroke="#80f000" stroke-width="1" fill="none" />
<text x="920" y="608" fill="#66c800" font-size="9.5" font-family="Liberation Sans" text-anchor="start" >P</text>
<text x="1016" y="608" fill="#66c800" font-size="9.5" font-family="Liberation Sans" text-anchor="start" >A</text>
<text x="1030" y="608" fill="#66c800" font-size="9.5" font-family="Liberation Sans" text-anchor="start" >B</text>
<text x="920" y="689" fill="#66c800" font-size="9.5" font-family="Liberation Sans" text-anchor="start" >P</text>
<text x="1016" y="689" fill="#66c800" font-size="9.5" font-family="Liberation Sans" text-anchor="start" >A</text>
<text x="1030" y="689" fill="#66c800" font-size="9.5" font-family="Liberation Sans" text-anchor="start" >B</text>
<text x="1125" y="689" fill="#66c800" font-size="9.5" font-family="Liberation Sans" text-anchor="start" >T</text>
<text x="1125" y="608" fill="#66c800" font-size="9.5" font-family="Liberation Sans" text-anchor="start" >T</text>
<path d="M970.5 704.5 H992.5 V691.5 H1073.5 V704.5 H1095.5 V718 H970.5 Z M992.5 691.5 V718 M1019.5 691.5 V718 M1046.5 691.5 V718 M1073.5 691.5 V718" stroke="#ffff00" stroke-width="1.3" fill="none" />
<path d="M978.5 718 L984.5 704.5" stroke="#ffff00" stroke-width="1" fill="none" />
<path d="M1087.5 718 L1081.5 704.5" stroke="#ffff00" stroke-width="1" fill="none" />
<path d="M973.5 702.5 L976.5 691.5 L979.5 702.5 L982.5 691.5 L985.5 702.5 L988.5 691.5 L991.5 702.5" stroke="#ffff00" stroke-width="1" fill="none" />
<path d="M1074.5 702.5 L1077.5 691.5 L1080.5 702.5 L1083.5 691.5 L1086.5 702.5 L1089.5 691.5 L1092.5 702.5" stroke="#ffff00" stroke-width="1" fill="none" />
<path d="M997.5 692.5 L1015.5 718 M997.5 718 L1015.5 692.5" stroke="#80f000" stroke-width="1" fill="none" />
<path d="M1016.5 692.5 L1010.5 696.5 L1014.5 699.5 Z M1016.5 717 L1010.5 713 L1014.5 710 Z" fill="#b8e8a0" stroke="#80f000" stroke-width=".8"/>
<path d="M1053.0 693.5 V718 M1067.0 691.5 V716" stroke="#80f000" stroke-width="1.1" fill="none" />
<path d="M1053.0 693.5 L1050.5 699.5 H1055.5 Z M1067.0 717 L1064.5 711 H1069.5 Z" fill="#b8e8a0" stroke="#80f000" stroke-width=".8"/>
<text x="962.5" y="714" fill="#ffff00" font-size="9" font-family="Liberation Sans" text-anchor="start" >a</text>
<text x="1099.5" y="714" fill="#ffff00" font-size="9" font-family="Liberation Sans" text-anchor="start" >b</text>
<text x="979" y="730" fill="#ffff00" font-size="11.5" font-family="Liberation Sans" text-anchor="start" >S1</text>
<text x="1080" y="730" fill="#ffff00" font-size="11.5" font-family="Liberation Sans" text-anchor="start" >S2</text>
<path d="M1021 711.5 H1032" stroke="#80f000" stroke-width="1.2" fill="none" />
<path d="M1153.5 705.0 H1183.5 L1187.5 711.5 L1183.5 718.0 H1153.5 L1149.5 711.5 Z" stroke="#18ecff" stroke-width="1.1" fill="none"/>
<text x="1168.5" y="715.7" fill="#18ecff" font-size="11.5" font-family="Liberation Sans" text-anchor="middle" letter-spacing="-0.3">201.1</text>
<path d="M1157.0 630.0 H1178.0 L1182.0 636.5 L1178.0 643.0 H1157.0 L1153.0 636.5 Z" stroke="#18ecff" stroke-width="1.1" fill="none"/>
<text x="1167.5" y="640.7" fill="#18ecff" font-size="11.5" font-family="Liberation Sans" text-anchor="middle" letter-spacing="-0.3">202</text>
<path d="M1229.5 596.5 H1461.5" stroke="#ffff00" stroke-width="1.3" fill="none" />
<circle cx="1243.5" cy="582.3" r="3.2" fill="#80f000"/>
<circle cx="1134.8" cy="528.5" r="3.2" fill="#80f000"/>
<circle cx="1447.5" cy="528.5" r="3.2" fill="#80f000"/>
<path d="M1243.5 582.5 V596" stroke="#ff8000" stroke-width="1.2" fill="none" />
<path d="M1134.5 528.5 V596 M1447.5 528.5 V596" stroke="#10b4f0" stroke-width="1.2" fill="none" />
<path d="M1379.5 501 V541.5 H1352.5 V650.5 H1447.5 V596" stroke="#80f000" stroke-width="1.2" fill="none" />
<path d="M1243.5 596 V650.5 H1338.5 V630" stroke="#80f000" stroke-width="1.2" fill="none" />
<circle cx="1352.5" cy="623.5" r="2.6" fill="#80f000"/>
<path d="M1284.5 623 H1304.5 V609.5 H1386.5 V623 H1406.5 V636 H1284.5 Z M1304.5 609.5 V636 M1331.5 609.5 V636 M1359.5 609.5 V636 M1386.5 609.5 V636" stroke="#ffff00" stroke-width="1.3" fill="none" />
<path d="M1292.5 636 L1298.5 623" stroke="#ffff00" stroke-width="1" fill="none" />
<path d="M1398.5 636 L1392.5 623" stroke="#ffff00" stroke-width="1" fill="none" />
<path d="M1287.5 621 L1290.5 609.5 L1293.5 621 L1296.5 609.5 L1299.5 621 L1302.5 609.5 L1305.5 621" stroke="#ffff00" stroke-width="1" fill="none" />
<path d="M1385.5 621 L1388.5 609.5 L1391.5 621 L1394.5 609.5 L1397.5 621 L1400.5 609.5 L1403.5 621" stroke="#ffff00" stroke-width="1" fill="none" />
<path d="M1309.5 610.5 L1327.5 636 M1309.5 636 L1327.5 610.5" stroke="#80f000" stroke-width="1" fill="none" />
<path d="M1328.5 610.5 L1322.5 614.5 L1326.5 617.5 Z M1328.5 635 L1322.5 631 L1326.5 628 Z" fill="#b8e8a0" stroke="#80f000" stroke-width=".8"/>
<path d="M1366.0 611.5 V636 M1380.0 609.5 V634" stroke="#80f000" stroke-width="1.1" fill="none" />
<path d="M1366.0 611.5 L1363.5 617.5 H1368.5 Z M1380.0 635 L1377.5 629 H1382.5 Z" fill="#b8e8a0" stroke="#80f000" stroke-width=".8"/>
<text x="1276.5" y="632" fill="#ffff00" font-size="9" font-family="Liberation Sans" text-anchor="start" >a</text>
<text x="1410.5" y="632" fill="#ffff00" font-size="9" font-family="Liberation Sans" text-anchor="start" >b</text>
<text x="1291" y="647" fill="#ffff00" font-size="11.5" font-family="Liberation Sans" text-anchor="start" >S1</text>
<text x="1394" y="647" fill="#ffff00" font-size="11.5" font-family="Liberation Sans" text-anchor="start" >S2</text>
<path d="M1333 630.5 H1345" stroke="#80f000" stroke-width="1" fill="none" />
<text x="1233" y="608" fill="#66c800" font-size="9.5" font-family="Liberation Sans" text-anchor="start" >P</text>
<text x="1329" y="608" fill="#66c800" font-size="9.5" font-family="Liberation Sans" text-anchor="start" >A</text>
<text x="1343" y="608" fill="#66c800" font-size="9.5" font-family="Liberation Sans" text-anchor="start" >B</text>
<text x="1438" y="608" fill="#66c800" font-size="9.5" font-family="Liberation Sans" text-anchor="start" >T</text>
<text x="1462" y="541" fill="#66c800" font-size="10" font-family="Liberation Sans" text-anchor="start" >T1</text>
<text x="1462" y="593" fill="#66c800" font-size="10" font-family="Liberation Sans" text-anchor="start" >P1</text>
<path d="M1466.0 624.0 H1496.0 L1500.0 630.5 L1496.0 637.0 H1466.0 L1462.0 630.5 Z" stroke="#18ecff" stroke-width="1.1" fill="none"/>
<text x="1481" y="634.7" fill="#18ecff" font-size="11.5" font-family="Liberation Sans" text-anchor="middle" letter-spacing="-0.3">201.2</text>
<path d="M672.5 680 V732" stroke="#80f000" stroke-width="1.2" fill="none" />
<path d="M670.5 677 H674.5 M670.5 679.5 H674.5" stroke="#ff3010" stroke-width="0.9" fill="none" />
<path d="M669 692.5 L680 694 L665 696.5 L680 699 L665 701.5 L680 704 L665 706.5 L680 709 L676 710" stroke="#ffff00" stroke-width="1" fill="none" />
<circle cx="672.5" cy="713.5" r="3.3" stroke="#ffff00" stroke-width="1" fill="none"/>
<path d="M665 710 L672.5 718 L680 710" stroke="#ffff00" stroke-width="1" fill="none" />
<text x="661" y="690" fill="#66c800" font-size="10" font-family="Liberation Sans" text-anchor="start" >B</text>
<text x="661" y="730" fill="#66c800" font-size="10" font-family="Liberation Sans" text-anchor="start" >A</text>
<rect x="671.0" y="730.5" width="3" height="3" fill="#ff4010"/>
<path d="M672.5 733 V744 M672.5 818 V847" stroke="#ff8000" stroke-width="1.2" fill="none" />
<text x="676.5" y="817" fill="#ffff00" font-size="10" font-family="Liberation Mono" text-anchor="start" transform="rotate(-90 676.5 817)" letter-spacing="-0.6">P1-H10031012*</text>
<path d="M688.5 698.0 H709.5 L713.5 704.5 L709.5 711.0 H688.5 L684.5 704.5 Z" stroke="#18ecff" stroke-width="1.1" fill="none"/>
<text x="699" y="708.7" fill="#18ecff" font-size="11.5" font-family="Liberation Sans" text-anchor="middle" letter-spacing="-0.3">105</text>
<path d="M530 739.5 A20.7 20.7 0 0 1 571 739.5" stroke="#ffff00" stroke-width="1.1" fill="none" />
<path d="M550.5 738 V760.5 M550.5 798 V820" stroke="#80f000" stroke-width="1.2" fill="none" />
<path d="M550.5 760.5 L570 779.5 L550.5 798.5 L531 779.5 Z" stroke="#ffff00" stroke-width="1.1" fill="none" />
<path d="M532 779.5 H568" stroke="#ffff00" stroke-width="1" fill="none" stroke-dasharray="4 2"/>
<rect x="549.0" y="818.5" width="3" height="3" fill="#ff4010"/>
<path d="M580.5 800.0 H601.5 L605.5 806.5 L601.5 813.0 H580.5 L576.5 806.5 Z" stroke="#18ecff" stroke-width="1.1" fill="none"/>
<text x="591" y="810.7" fill="#18ecff" font-size="11.5" font-family="Liberation Sans" text-anchor="middle" letter-spacing="-0.3">101</text>
<path d="M522.5 983 V820.5 H1012.5 V983 Z" stroke="#ffffff" stroke-width="1.2" fill="none" />
<path d="M733.0 818.5 H748.0 M733.0 822.5 H748.0 M740.5 812 V818.5 M740.5 822.5 V829" stroke="#ffff00" stroke-width="1.1" fill="none" />
<path d="M739.0 812 L742.0 815 M742.0 812 L739.0 815 M739.0 826 L742.0 829 M742.0 826 L739.0 829" stroke="#ff3010" stroke-width="0.8" fill="none" />
<text x="756.0" y="817" fill="#18ecff" font-size="11.5" font-family="Liberation Sans" text-anchor="start" >T</text>
<path d="M794.0 818.5 H809.0 M794.0 822.5 H809.0 M801.5 812 V818.5 M801.5 822.5 V829" stroke="#ffff00" stroke-width="1.1" fill="none" />
<path d="M800.0 812 L803.0 815 M803.0 812 L800.0 815 M800.0 826 L803.0 829 M803.0 826 L800.0 829" stroke="#ff3010" stroke-width="0.8" fill="none" />
<text x="817.0" y="817" fill="#18ecff" font-size="11.5" font-family="Liberation Sans" text-anchor="start" >T1</text>
<path d="M937.0 818.5 H952.0 M937.0 822.5 H952.0 M944.5 812 V818.5 M944.5 822.5 V829" stroke="#ffff00" stroke-width="1.1" fill="none" />
<path d="M943.0 812 L946.0 815 M946.0 812 L943.0 815 M943.0 826 L946.0 829 M946.0 826 L943.0 829" stroke="#ff3010" stroke-width="0.8" fill="none" />
<text x="960.0" y="817" fill="#18ecff" font-size="10" font-family="Liberation Sans" text-anchor="start" >T2</text>
<text x="756" y="840" fill="#ffff00" font-size="9.5" font-family="Liberation Mono" text-anchor="start" letter-spacing="-1">G 3/8</text>
<text x="818" y="840" fill="#ffff00" font-size="9.5" font-family="Liberation Mono" text-anchor="start" letter-spacing="-1">G 1/2</text>
<text x="960" y="840" fill="#ffff00" font-size="10.5" font-family="Liberation Mono" text-anchor="start" letter-spacing="-1">G 1/2</text>
<path d="M740.5 828 V888 M801.5 828 V889" stroke="#10b4f0" stroke-width="1.2" fill="none" />
<path d="M801.5 767 V815" stroke="#10b4f0" stroke-width="1.2" fill="none" stroke-dasharray="5 4"/>
<rect x="793.5" y="731.5" width="17" height="35" stroke="#ffff00" stroke-width="1.3" fill="none"/>
<text x="806" y="749" fill="#ffff00" font-size="11" font-family="Liberation Mono" text-anchor="middle" transform="rotate(-90 806 749)" letter-spacing="-1.2">DR1&#8211;1</text>
<path d="M930.5 955 V861.5 H958.5 V955 Z M934 952 V865 H955 V952 Z" stroke="#ffff00" stroke-width="1.3" fill="none" />
<path d="M944.5 827 V860 M944.5 888 V936" stroke="#ffff00" stroke-width="0" fill="none" />
<path d="M944.5 916 V935" stroke="#ffff00" stroke-width="1" fill="none" />
<rect x="942" y="932" width="5" height="5" fill="#bbb"/>
<path d="M968.0 902.5 H987.0 L991.0 909 L987.0 915.5 H968.0 L964.0 909 Z" stroke="#18ecff" stroke-width="1.1" fill="none"/>
<text x="977.5" y="913.2" fill="#18ecff" font-size="11.5" font-family="Liberation Sans" text-anchor="middle" letter-spacing="-0.3">108</text>
<circle cx="576.7" cy="881.2" r="20.4" stroke="#ffff00" stroke-width="1.1" fill="none"/>
<path d="M568.5 889.5 V873 L576.7 884 L585 873 V889.5" stroke="#ffff00" stroke-width="1.1" fill="none" />
<circle cx="672.5" cy="881.2" r="19.8" stroke="#ffff00" stroke-width="1.1" fill="none"/>
<path d="M666 872 L672.5 862.5 L679 872 Z" fill="#c8c8c8" stroke="#ffff00" stroke-width=".8"/>
<path d="M597 878.5 H618 M597 884 H618 M632 878.5 H652.5 M632 884 H652.5" stroke="#ffff00" stroke-width="1.1" fill="none" />
<path d="M614.5 869.5 H636 V873.5 H632 V889.5 H636 V893.5 H614.5 V889.5 H618 V873.5 H614.5 Z M625 869.5 V893.5" stroke="#ffff00" stroke-width="1.1" fill="none" />
<path d="M583 861 L654 867.5 M583 901 L654 895" stroke="#ffff00" stroke-width="1.1" fill="none" />
<path d="M699 866 Q705 881 699 896" stroke="#ffff00" stroke-width="1.1" fill="none" />
<path d="M697 890 L700 897 L703 889 Z" fill="#c8c8c8" stroke="#ffff00" stroke-width=".6"/>
<path d="M672.5 848 V861.5 M672.5 901 V930" stroke="#80f000" stroke-width="1.2" fill="none" />
<path d="M670.5 846 H674.5 M670.5 848.5 H674.5" stroke="#ff3010" stroke-width="0.9" fill="none" />
<path d="M670.5 914 H674.5 M670.5 916.5 H674.5" stroke="#ff3010" stroke-width="0.9" fill="none" />
<text x="662" y="859.5" fill="#66c800" font-size="10" font-family="Liberation Sans" text-anchor="start" >P</text>
<text x="662" y="913" fill="#66c800" font-size="10" font-family="Liberation Sans" text-anchor="start" >S</text>
<path d="M672.5 930 L691 948.5 L672.5 967 L654 948.5 Z" stroke="#ffff00" stroke-width="1" fill="none" />
<path d="M656 948.5 H689" stroke="#ffff00" stroke-width="1" fill="none" stroke-dasharray="4 2"/>
<path d="M567.0 841.0 H588.0 L592.0 847.5 L588.0 854.0 H567.0 L563.0 847.5 Z" stroke="#18ecff" stroke-width="1.1" fill="none"/>
<text x="577.5" y="851.7" fill="#18ecff" font-size="11.5" font-family="Liberation Sans" text-anchor="middle" letter-spacing="-0.3">102</text>
<path d="M614.5 841.0 H635.5 L639.5 847.5 L635.5 854.0 H614.5 L610.5 847.5 Z" stroke="#18ecff" stroke-width="1.1" fill="none"/>
<text x="625" y="851.7" fill="#18ecff" font-size="11.5" font-family="Liberation Sans" text-anchor="middle" letter-spacing="-0.3">104</text>
<path d="M594.0 909.0 H615.0 L619.0 915.5 L615.0 922.0 H594.0 L590.0 915.5 Z" stroke="#18ecff" stroke-width="1.1" fill="none"/>
<text x="604.5" y="919.7" fill="#18ecff" font-size="11.5" font-family="Liberation Sans" text-anchor="middle" letter-spacing="-0.3">103</text>
<path d="M717.0 875.0 H736.0 L740.0 881.5 L736.0 888.0 H717.0 L713.0 881.5 Z" stroke="#18ecff" stroke-width="1.1" fill="none"/>
<text x="726.5" y="885.7" fill="#18ecff" font-size="11.5" font-family="Liberation Sans" text-anchor="middle" letter-spacing="-0.3">107</text>
<path d="M718.0 942.5 H737.0 L741.0 949 L737.0 955.5 H718.0 L714.0 949 Z" stroke="#18ecff" stroke-width="1.1" fill="none"/>
<text x="727.5" y="953.2" fill="#18ecff" font-size="11.5" font-family="Liberation Sans" text-anchor="middle" letter-spacing="-0.3">106</text>
<rect x="520" y="936.5" width="194" height="18.5" rx="2.5" fill="#6a6a6a" fill-opacity="0.85"/>
<text x="521" y="951" fill="#c4c4c4" font-size="15.1" font-family="Liberation Mono" text-anchor="start" >Command: _CreateStack</text>
<rect x="520" y="962" width="517" height="18" rx="2.5" fill="#6a6a6a" fill-opacity="0.85"/>
<text x="521" y="976" fill="#e2e2e2" font-size="15.1" font-family="Liberation Mono" text-anchor="start" >Select Symbols to Stack: Specify opposite corner: 2 found</text>
<rect x="520" y="986.5" width="221" height="18.0" rx="2.5" fill="#6a6a6a" fill-opacity="0.85"/>
<text x="521" y="1000.5" fill="#e8e8e8" font-size="15.1" font-family="Liberation Mono" text-anchor="start" >Select Symbols to Stack:</text>
<path d="M470.5 961 V1011 M479.5 957 V949 L472 941 M479.5 949 L487 941" stroke="#ffffff" stroke-width="1.1" fill="none" />
<path d="M537 1006 L544.5 1012 M552 1006 L544.5 1012" stroke="#ffffff" stroke-width="1" fill="none" /></svg></div>

<div id="dialog">
<div class="a" style="left:1187px;top:732px;width:298px;height:185px;background:#f0f0f0;border-radius:8px;border:1px solid #bdbdbd;overflow:hidden;box-shadow:0 2px 8px rgba(0,0,0,.3)">
 <div class="a" style="left:0;top:0;width:298px;height:37px;background:#fff"></div>
</div>
<div class="t" style="left:1196px;top:742px;font-size:14.5px;letter-spacing:-0.3px;color:#111">Create Stack</div>
<div class="t" style="left:1199px;top:779px;font-size:13.5px;letter-spacing:-0.3px;color:#111">Stack direction</div>
<div class="a" style="left:1290px;top:789px;width:182px;height:1px;background:#a0a0a0"></div>
<div class="a" style="left:1200px;top:803px;width:54px;height:52px;background:#fdfdfd;border:1px solid #ececec;border-radius:3px"></div>
<div class="a" style="left:1202px;top:805px;width:50px;height:48px;background:#f9d46c"></div>
<div class="a" style="left:1267px;top:802px;width:59px;height:54px;background:#fdfdfd;border:1px solid #c8c8c8;border-radius:4px"></div>
<div class="a" style="left:1339px;top:804px;width:59px;height:54px;background:#f8f8f8;border:1px solid #ececec;border-radius:4px"></div>
<div class="a" style="left:1412px;top:802px;width:59px;height:54px;background:#f8f8f8;border:1px solid #ececec;border-radius:4px"></div>
<svg class="a" style="left:0;top:0;overflow:visible" width="1920" height="1080">
 <g stroke="#111" stroke-width="1.5"><line x1="1458" y1="744.5" x2="1470" y2="756.5"/><line x1="1470" y1="744.5" x2="1458" y2="756.5"/></g>
 <rect x="1209.0" y="809.5" width="36" height="10.5" rx="2" fill="#3f6fd6" stroke="#2a2a9a" stroke-width="1.4"/><rect x="1212.0" y="812" width="30" height="5.5" fill="#3a6ad0" stroke="#5ec0f4" stroke-width="1"/><rect x="1228.5" y="812.5" width="13" height="4.5" fill="#7a8ff0" opacity=".8"/><rect x="1209.0" y="823.0" width="36" height="10.5" rx="2" fill="#3f6fd6" stroke="#2a2a9a" stroke-width="1.4"/><rect x="1212.0" y="825.5" width="30" height="5.5" fill="#3a6ad0" stroke="#5ec0f4" stroke-width="1"/><rect x="1228.5" y="826.0" width="13" height="4.5" fill="#7a8ff0" opacity=".8"/><rect x="1209.0" y="836.5" width="36" height="10.5" rx="2" fill="#3f6fd6" stroke="#2a2a9a" stroke-width="1.4"/><rect x="1212.0" y="839" width="30" height="5.5" fill="#3a6ad0" stroke="#5ec0f4" stroke-width="1"/><rect x="1228.5" y="839.5" width="13" height="4.5" fill="#7a8ff0" opacity=".8"/>
 <path d="M1226.5 812 L1238 828 H1231.5 V846 H1221.5 V828 H1215 Z" fill="#5fdc55" stroke="#17601a" stroke-width="1.6" stroke-linejoin="round"/>
 <path d="M1224.5 832 V846 L1228 843 L1231 849.5 L1233 848.5 L1230.5 842 H1235 Z" fill="#fff" stroke="#111" stroke-width="1"/>
 <rect x="1279.0" y="810.0" width="36" height="10.5" rx="2" fill="#3f6fd6" stroke="#2a2a9a" stroke-width="1.4"/><rect x="1282.0" y="812.5" width="30" height="5.5" fill="#3a6ad0" stroke="#5ec0f4" stroke-width="1"/><rect x="1298.5" y="813.0" width="13" height="4.5" fill="#7a8ff0" opacity=".8"/><rect x="1279.0" y="823.5" width="36" height="10.5" rx="2" fill="#3f6fd6" stroke="#2a2a9a" stroke-width="1.4"/><rect x="1282.0" y="826.0" width="30" height="5.5" fill="#3a6ad0" stroke="#5ec0f4" stroke-width="1"/><rect x="1298.5" y="826.5" width="13" height="4.5" fill="#7a8ff0" opacity=".8"/><rect x="1279.0" y="837.0" width="36" height="10.5" rx="2" fill="#3f6fd6" stroke="#2a2a9a" stroke-width="1.4"/><rect x="1282.0" y="839.5" width="30" height="5.5" fill="#3a6ad0" stroke="#5ec0f4" stroke-width="1"/><rect x="1298.5" y="840.0" width="13" height="4.5" fill="#7a8ff0" opacity=".8"/>
 <path d="M1296.5 846 L1308 830 H1301.5 V812.5 H1291.5 V830 H1285 Z" fill="#5fdc55" stroke="#17601a" stroke-width="1.6" stroke-linejoin="round"/>
 <rect x="1350.0" y="811.5" width="10" height="37" rx="2" fill="#9a9a9a" stroke="#858585" stroke-width="1.4"/><rect x="1352.5" y="814" width="5" height="32" fill="#8e8e8e" stroke="#a8a8a8" stroke-width="1"/><rect x="1363.5" y="811.5" width="10" height="37" rx="2" fill="#9a9a9a" stroke="#858585" stroke-width="1.4"/><rect x="1366.0" y="814" width="5" height="32" fill="#8e8e8e" stroke="#a8a8a8" stroke-width="1"/><rect x="1377.0" y="811.5" width="10" height="37" rx="2" fill="#9a9a9a" stroke="#858585" stroke-width="1.4"/><rect x="1379.5" y="814" width="5" height="32" fill="#8e8e8e" stroke="#a8a8a8" stroke-width="1"/>
 <path d="M1351 823.5 H1367 V816 L1385 830 L1367 844 V836.5 H1351 Z" fill="#c2c2c2" stroke="#8a8a8a" stroke-width="1.4" stroke-linejoin="round"/>
 <rect x="1423.0" y="810.0" width="10" height="37" rx="2" fill="#9a9a9a" stroke="#858585" stroke-width="1.4"/><rect x="1425.5" y="812.5" width="5" height="32" fill="#8e8e8e" stroke="#a8a8a8" stroke-width="1"/><rect x="1436.5" y="810.0" width="10" height="37" rx="2" fill="#9a9a9a" stroke="#858585" stroke-width="1.4"/><rect x="1439.0" y="812.5" width="5" height="32" fill="#8e8e8e" stroke="#a8a8a8" stroke-width="1"/><rect x="1450.0" y="810.0" width="10" height="37" rx="2" fill="#9a9a9a" stroke="#858585" stroke-width="1.4"/><rect x="1452.5" y="812.5" width="5" height="32" fill="#8e8e8e" stroke="#a8a8a8" stroke-width="1"/>
 <path d="M1460 822 H1444 V814.5 L1426 828.5 L1444 842.5 V835 H1460 Z" fill="#c2c2c2" stroke="#8a8a8a" stroke-width="1.4" stroke-linejoin="round"/>
</svg>
<div class="a" style="left:1280px;top:875px;width:92px;height:29px;background:#fdfdfd;border:1px solid #0067c0;box-shadow:inset 0 0 0 1px rgba(0,103,192,.5);border-radius:4px"></div>
<div class="a" style="left:1380px;top:875px;width:92px;height:29px;background:#fdfdfd;border:1px solid #cfcfcf;border-radius:4px"></div>
<div class="t" style="left:1280px;top:880px;width:92px;text-align:center;font-size:15px;color:#111">OK</div>
<div class="t" style="left:1380px;top:880px;width:92px;text-align:center;font-size:15px;color:#111">Cancel</div>
</div>
<!-- /dialog -->
<!-- right panel -->
<div class="a" style="left:1575px;top:223px;width:345px;height:820px;background:#f0f0f0"></div>
<div class="a" style="left:1575px;top:223px;width:345px;height:27px;background:#dadada;border-radius:4px 0 0 0"></div>
<div class="grip" style="left:1584px;top:231px"></div>
<div class="t" style="left:1594px;top:227px;font-size:15px;letter-spacing:-1px;color:#333">HYDRAW PROPERTY MANAGER</div>
<div class="a" style="left:1575px;top:253px;width:106px;height:27px;background:#f7f7f7"></div>
<div class="a" style="left:1681px;top:255px;width:56px;height:25px;background:#efefef;border:1px solid #e0e0e0"></div>
<div class="t" style="left:1583px;top:257px;font-size:15px;color:#111">Selected Item</div>
<div class="t" style="left:1686px;top:259px;font-size:15px;color:#111">System</div>
<div class="a" style="left:1579px;top:280px;width:339px;height:701px;border:1px solid #f7f7f7;background:#efefef"></div>
<div class="a" style="left:1577px;top:997px;width:334px;height:33px;border:1px solid #d8d8d8"></div>
<div id="props">
<div class="a" style="left:1583px;top:286px;width:329px;height:30px;background:#f3f6fb"></div>
<div class="t" style="left:1595px;top:293px;font-size:15px;font-weight:bold;letter-spacing:-0.5px;color:#111">Symbol</div>
<div class="a" style="left:1583px;top:328px;width:329px;height:30px;background:#f3f6fb"></div>
<div class="t" style="left:1595px;top:335px;font-size:15px;font-weight:bold;letter-spacing:-0.5px;color:#111">Design requirements</div>
<div class="a" style="left:1583px;top:370px;width:329px;height:30px;background:#f3f6fb"></div>
<div class="t" style="left:1595px;top:377px;font-size:15px;font-weight:bold;letter-spacing:-0.5px;color:#111">Model data</div>
<div class="a" style="left:1583px;top:412px;width:329px;height:30px;background:#f3f6fb"></div>
<div class="t" style="left:1595px;top:419px;font-size:15px;font-weight:bold;letter-spacing:-0.5px;color:#111">Accessories</div>
<div class="a" style="left:1583px;top:454px;width:329px;height:30px;background:#f3f6fb"></div>
<div class="t" style="left:1595px;top:461px;font-size:15px;font-weight:bold;letter-spacing:-0.5px;color:#111">Documents</div>
<div class="a" style="left:1583px;top:496px;width:329px;height:30px;background:#f3f6fb"></div>
<div class="t" style="left:1595px;top:503px;font-size:15px;font-weight:bold;letter-spacing:-0.5px;color:#111">CAD Files</div>
<svg class="a" style="left:0;top:0" width="1920" height="1080">
<path d="M1896 304.5 L1902 297 L1908 304.5 Z" fill="#b4b4b4" stroke="#b4b4b4" stroke-linejoin="round"/>
<path d="M1896 346.5 L1902 339 L1908 346.5 Z" fill="#b4b4b4" stroke="#b4b4b4" stroke-linejoin="round"/>
<path d="M1855.5 333.5 H1874 V346 L1866 351.5 H1855.5 Z" fill="#eee" stroke="#999"/><path d="M1860 339 H1867 M1860 343 H1865 M1866 345 L1874 336 L1876 338 L1868 347 Z" fill="none" stroke="#999" stroke-width="1.2"/>
<path d="M1896 388.5 L1902 381 L1908 388.5 Z" fill="#b4b4b4" stroke="#b4b4b4" stroke-linejoin="round"/>
<path d="M1824 376 H1842 V394 H1826 L1824 392 Z" fill="#808080" stroke="#777" stroke-linejoin="round"/><rect x="1827" y="377" width="12" height="5" fill="#d5d5d5"/><rect x="1828" y="387" width="10" height="6" fill="#e5e5e5"/><rect x="1829" y="389" width="2" height="2" fill="#777"/>
<rect x="1861.5" y="375.5" width="13" height="16" rx="1" fill="#e6e6e6" stroke="#8a8a8a"/><path d="M1862 378 H1874 M1864 381 H1872 M1864 384 H1872 M1864 387 H1872" stroke="#8a8a8a"/><path d="M1854 390 H1864" stroke="#777" stroke-width="2.5"/><path d="M1862 386 L1866 390 L1862 394 Z" fill="#777"/>
<path d="M1896 430.5 L1902 423 L1908 430.5 Z" fill="#b4b4b4" stroke="#b4b4b4" stroke-linejoin="round"/>
<path d="M1764.5 420.5 L1777 433 M1777 420.5 L1764.5 433" stroke="#a8a8a8" stroke-width="3.2" stroke-linecap="round"/>
<rect x="1792.5" y="417.5" width="17" height="17" fill="#e3e3e3" stroke="#9a9a9a"/><circle cx="1803" cy="423" r="3" fill="#fff" stroke="#bbb"/>
<path d="M1824 418 H1842 V436 H1826 L1824 434 Z" fill="#808080" stroke="#777" stroke-linejoin="round"/><rect x="1827" y="419" width="12" height="5" fill="#d5d5d5"/><rect x="1828" y="429" width="10" height="6" fill="#e5e5e5"/><rect x="1829" y="431" width="2" height="2" fill="#777"/>
<rect x="1861.5" y="417.5" width="13" height="16" rx="1" fill="#e6e6e6" stroke="#8a8a8a"/><path d="M1862 420 H1874 M1864 423 H1872 M1864 426 H1872 M1864 429 H1872" stroke="#8a8a8a"/><path d="M1854 432 H1864" stroke="#777" stroke-width="2.5"/><path d="M1862 428 L1866 432 L1862 436 Z" fill="#777"/>
<path d="M1896 472.5 L1902 465 L1908 472.5 Z" fill="#b4b4b4" stroke="#b4b4b4" stroke-linejoin="round"/>
<path d="M1826.5 462.5 L1839 475 M1839 462.5 L1826.5 475" stroke="#a8a8a8" stroke-width="3.2" stroke-linecap="round"/>
<rect x="1861.5" y="459.5" width="13" height="16" rx="1" fill="#e6e6e6" stroke="#8a8a8a"/><path d="M1862 462 H1874 M1864 465 H1872 M1864 468 H1872 M1864 471 H1872" stroke="#8a8a8a"/><path d="M1854 474 H1864" stroke="#777" stroke-width="2.5"/><path d="M1862 470 L1866 474 L1862 478 Z" fill="#777"/>
<path d="M1896 514.5 L1902 507 L1908 514.5 Z" fill="#b4b4b4" stroke="#b4b4b4" stroke-linejoin="round"/>
<path d="M1826.5 504.5 L1839 517 M1839 504.5 L1826.5 517" stroke="#a8a8a8" stroke-width="3.2" stroke-linecap="round"/>
<rect x="1861.5" y="501.5" width="13" height="16" rx="1" fill="#e6e6e6" stroke="#8a8a8a"/><path d="M1862 504 H1874 M1864 507 H1872 M1864 510 H1872 M1864 513 H1872" stroke="#8a8a8a"/><path d="M1854 516 H1864" stroke="#777" stroke-width="2.5"/><path d="M1862 512 L1866 516 L1862 520 Z" fill="#777"/>
</svg>
</div>

<!-- command line -->
<div class="a" style="left:443px;top:1010px;width:75px;height:33px;background:#dadada;border-radius:5px 0 0 5px"></div>
<div class="a" style="left:513px;top:1010px;width:1064px;height:33px;background:#fff;border-radius:5px 5px 0 0"></div>
<svg class="a" style="left:443px;top:1010px" width="230" height="33">
 <g fill="#555"><rect x="4.5" y="5.5" width="2" height="2"/><rect x="4.5" y="9.5" width="2" height="2"/><rect x="4.5" y="13.5" width="2" height="2"/><rect x="4.5" y="17.5" width="2" height="2"/><rect x="4.5" y="21.5" width="2" height="2"/><rect x="4.5" y="25.5" width="2" height="2"/><rect x="9" y="5.5" width="2" height="2"/><rect x="9" y="9.5" width="2" height="2"/><rect x="9" y="13.5" width="2" height="2"/><rect x="9" y="17.5" width="2" height="2"/><rect x="9" y="21.5" width="2" height="2"/><rect x="9" y="25.5" width="2" height="2"/></g>
 <g stroke="#555" stroke-width="2.4"><line x1="19.5" y1="11" x2="29.5" y2="21"/><line x1="29.5" y1="11" x2="19.5" y2="21"/></g>
 <path d="M48 24 L57.5 14.5 C56 10 59 6.5 63.5 6 L61 9.5 L63.5 12 L67 9.5 C67.5 14 63 17 59 16.5 L50 26 Z" fill="#fafafa" stroke="#9a9a9a" stroke-width="1.1" stroke-linejoin="round"/>
 <rect x="75.5" y="9.5" width="19" height="14" fill="#f3f3f3" stroke="#666" stroke-width="1"/><rect x="75.5" y="9.5" width="19" height="3.5" fill="#666"/><rect x="76.5" y="10" width="1.2" height="1.2" fill="#fff"/><path d="M78 16 L81 18 L78 20 M82 21 H87" fill="none" stroke="#777" stroke-width=".9"/>
 <path d="M98 15 H106 L102 19 Z" fill="#444"/>
</svg>
<div class="t" style="left:557px;top:1020px;font-size:13.5px;font-weight:bold;color:#111">CREATESTACK</div>
<svg class="a" style="left:1558px;top:1020px" width="14" height="14"><path d="M3 10 L8 5 L13 10 Z" fill="#333"/></svg>

<!-- status bar -->
<div class="a" style="left:0;top:1043px;width:1920px;height:35px;background:#dadada"></div>
<div class="a" style="left:0;top:1078px;width:1920px;height:2px;background:#17575b"></div>
<div id="status">
<svg class="a" style="left:0;top:1043px" width="260" height="35">
 <path d="M8 1 L92 1 C86 1 84 6 82 14 C80 22 78 24 72 24 L28 24 C22 24 20 22 18 14 C16 6 14 1 8 1 Z" fill="#f3f3f3"/>
 <path d="M86 1 L156 1 C150 1 148 6 146 14 C144 22 142 24 136 24 L100 24 C94 24 92 22 90 14 C88 6 88 1 86 1 Z" fill="#e2e2e2"/>
 <path d="M150 1 L220 1 C214 1 212 6 210 14 C208 22 206 24 200 24 L164 24 C158 24 156 22 154 14 C152 6 152 1 150 1 Z" fill="#e2e2e2"/>
 <path d="M245 4 C240 4 238 10 236 16 C234 21 232 22 228 22 L222 22 C220 22 218 21 219 18 C221 12 224 4 230 4 Z" fill="#e6e6e6"/>
 <g stroke="#666" stroke-width="2"><line x1="232" y1="8" x2="232" y2="18"/><line x1="227" y1="13" x2="237" y2="13"/></g>
</svg>
<div class="t" style="left:28px;top:1047px;font-size:15px;font-weight:bold;color:#222">Model</div>
<div class="t" style="left:101px;top:1047px;font-size:15px;color:#777">pag1</div>
<div class="t" style="left:164px;top:1047px;font-size:15px;color:#777">pag2</div>
<div class="a" style="left:1103px;top:1044px;width:817px;height:33px;background:#f3f3f3"></div>
<div class="a" style="left:1134px;top:1047px;width:28px;height:28px;background:#cce4f7;border:1px solid #4f8fd0"></div>
<div class="a" style="left:1402px;top:1047px;width:28px;height:28px;background:#cce4f7;border:1px solid #4f8fd0"></div>
<div class="a" style="left:1790px;top:1047px;width:28px;height:28px;background:#cce4f7;border:1px solid #4f8fd0"></div>
<svg class="a" style="left:0;top:0" width="1920" height="1080">
 <g fill="#dcdcdc">
  <rect x="1184" y="1045" width="2" height="31"/><rect x="1216" y="1045" width="2" height="31"/><rect x="1347" y="1045" width="2" height="31"/><rect x="1398" y="1045" width="2" height="31"/><rect x="1434" y="1045" width="2" height="31"/><rect x="1495" y="1045" width="2" height="31"/><rect x="1548" y="1045" width="2" height="31"/><rect x="1671" y="1045" width="2" height="31"/><rect x="1703" y="1045" width="2" height="31"/><rect x="1755" y="1045" width="2" height="31"/><rect x="1787" y="1045" width="2" height="31"/><rect x="1822" y="1045" width="2" height="31"/><rect x="1857" y="1045" width="2" height="31"/>
 </g>
 <g fill="none" stroke="#444" stroke-width="1.3">
  <path d="M1112 1051 V1071 M1117 1051 V1071 M1122 1051 V1071 M1108 1055 H1127 M1108 1060.5 H1127 M1108 1066 H1127"/>
 </g>
 <g fill="#333"><rect x="1139.5" y="1052.0" width="3" height="3"/><rect x="1139.5" y="1058.5" width="3" height="3"/><rect x="1139.5" y="1065.0" width="3" height="3"/><rect x="1146.0" y="1052.0" width="3" height="3"/><rect x="1146.0" y="1058.5" width="3" height="3"/><rect x="1146.0" y="1065.0" width="3" height="3"/><rect x="1152.5" y="1052.0" width="3" height="3"/><rect x="1152.5" y="1058.5" width="3" height="3"/><rect x="1152.5" y="1065.0" width="3" height="3"/></g>
 <g fill="#555">
  <path d="M1168 1058 H1178 L1173 1063 Z"/><path d="M1282 1058 H1292 L1287 1063 Z"/><path d="M1332 1058 H1342 L1337 1063 Z"/><path d="M1383 1058 H1393 L1388 1063 Z"/><path d="M1532 1058 H1542 L1537 1063 Z"/><path d="M1656 1058 H1666 L1661 1063 Z"/><path d="M1740 1058 H1750 L1745 1063 Z"/>
 </g>
 <g fill="none" stroke="#555" stroke-width="1.3">
  <path d="M1191 1057 H1199 M1195 1053 V1061"/><rect x="1199" y="1063.5" width="12" height="5" fill="#555"/><rect x="1199" y="1063.5" width="3" height="5" fill="#fff"/>
  <path d="M1222.5 1051 V1070.5 H1242 M1222.5 1065 H1227 V1070.5"/>
  <circle cx="1259.5" cy="1061.5" r="7.5" stroke="#777"/><path d="M1257 1061.5 H1272 M1259 1064 L1267 1051" stroke="#777"/>
  <path d="M1303 1051 L1319 1071" stroke="#e04040"/><path d="M1311 1050 V1072" stroke="#20b040"/><rect x="1309.5" y="1059" width="3" height="3" fill="#fff" stroke="#555" stroke-width=".8"/>
  <rect x="1355.5" y="1054.5" width="17" height="16" stroke="#444"/><rect x="1353.5" y="1050.5" width="5" height="5" stroke="#e8843a" fill="#fff"/>
  <path d="M1407 1052 V1070 H1424 M1404 1055 L1407 1051 L1410 1055 M1421 1067 L1425 1070 L1421 1073" stroke="#222" stroke-width="1.6"/><path d="M1417 1055 L1413 1060 L1418 1060 L1414 1065" stroke="#222" stroke-width="1.4"/>
  <path d="M1439.5 1058 V1051.5 H1446 M1452 1051.5 H1458.5 V1058 M1439.5 1064 V1070.5 H1446 M1452 1070.5 H1458.5 V1064" stroke-dasharray="2.5 1.5" stroke="#444"/><rect x="1445.5" y="1057.5" width="8" height="8" stroke="#444"/><path d="M1441 1053 L1446 1058" stroke="#444"/>
  <path d="M1470 1072 L1478 1052 L1487 1072 L1478 1065 Z" fill="#444" stroke="#444"/><path d="M1484 1054 L1488 1050 L1487 1055 L1491 1051" stroke="#444" stroke-width="1"/>
 </g>
 <circle cx="1511.5" cy="1060.5" r="6" fill="none" stroke="#555" stroke-width="4"/>
 <g stroke="#555" stroke-width="3.5"><path d="M1511.5 1050 V1054 M1511.5 1067 V1071 M1501 1060.5 H1505 M1518 1060.5 H1522 M1504 1053 L1507 1056 M1516 1065 L1519 1068 M1504 1068 L1507 1065 M1516 1056 L1519 1053"/></g>
 <rect x="1560" y="1052" width="10" height="18" fill="#555"/><g stroke="#f3f3f3" stroke-width="1"><path d="M1566 1056 H1570 M1567 1060 H1570 M1566 1064 H1570"/></g>
 <g fill="none" stroke="#444" stroke-width="1.3">
  <rect x="1679.5" y="1051.5" width="14" height="18"/><path d="M1679.5 1054 H1693.5 M1682 1058 H1684 M1686 1058 H1691 M1682 1062 H1684 M1686 1062 H1691 M1682 1066 H1684 M1686 1066 H1691"/>
  <path d="M1728 1058 V1051.5 H1710.5 V1067.5 H1719"/><path d="M1710.5 1053 H1728" stroke-width="2"/><path d="M1723 1061 V1058 A3 3 0 0 1 1729 1058"/>
  <rect x="1761.5" y="1051.5" width="7" height="7"/><circle cx="1776.5" cy="1060" r="4"/><path d="M1760.5 1070.5 L1765 1062 L1769.5 1070.5 Z"/>
  <circle cx="1803.5" cy="1060.5" r="9" stroke="#888" fill="#d4dbe2"/><path d="M1807 1056 L1801 1064" stroke="#777"/>
  <rect x="1864.5" y="1052.5" width="24" height="16"/><path d="M1868 1065 L1874 1059 M1868 1061 V1065 H1872 M1885 1056 L1879 1062 M1885 1060 V1056 H1881" stroke-width="1.1"/>
  <path d="M1894 1052 H1914 M1894 1060.5 H1914 M1894 1069 H1914" stroke-width="2.2"/>
 </g>
 <rect x="1719" y="1063" width="10" height="8" fill="#444"/>
 <path d="M1827 1049 L1838 1047 L1848 1056 L1844 1068 L1827 1068 Z" fill="#2f68b0"/><rect x="1826" y="1058" width="10" height="9" fill="#f0b929"/><path d="M1837 1063 L1842 1068 L1851 1058" fill="none" stroke="#2eaa4a" stroke-width="2.6"/><path d="M1830 1052 L1834 1050 L1838 1053" stroke="#9cc" fill="none"/>
</svg>
<div class="t" style="left:1586px;top:1053px;font-size:15px;color:#222">Decimal</div>
</div>

</body></html>
